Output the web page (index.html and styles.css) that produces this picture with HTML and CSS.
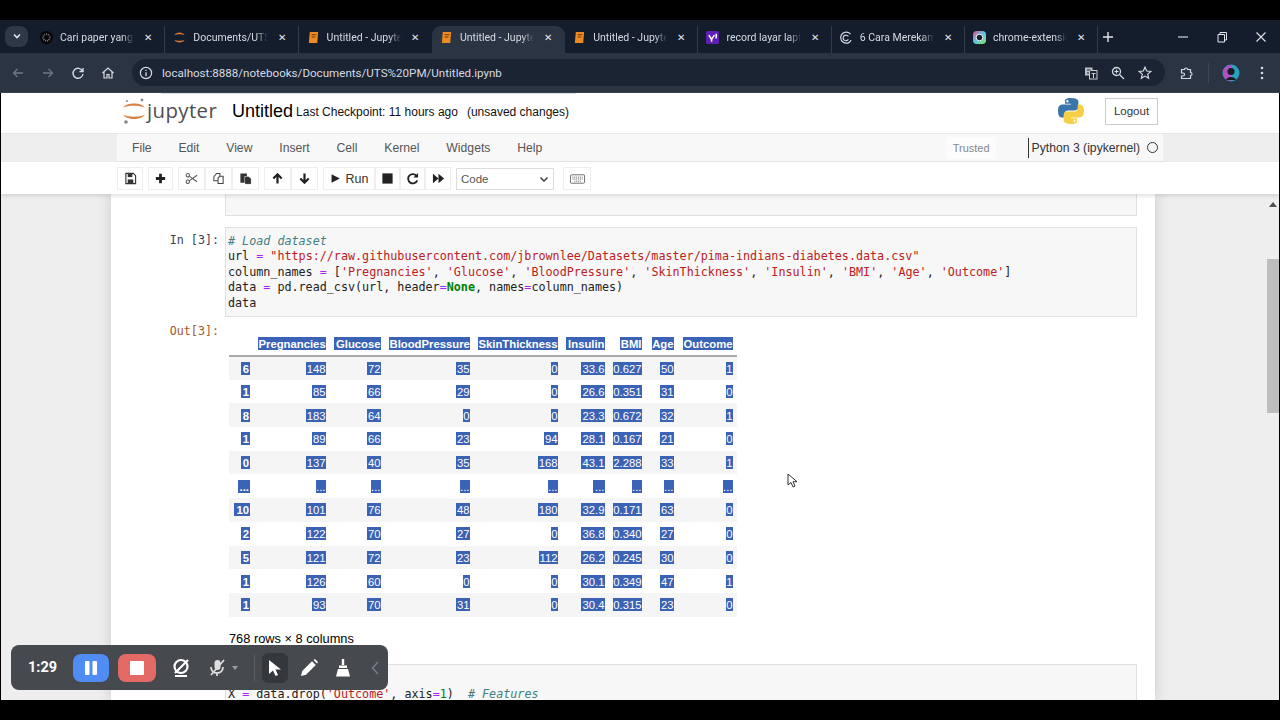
FILE: index.html
```html
<!DOCTYPE html>
<html lang="en">
<head>
<meta charset="utf-8">
<title>Untitled - Jupyter Notebook</title>
<link rel="stylesheet" href="styles.css">
</head>
<body>
<div class="screen">
  <div class="letterbox"></div>
  <div class="chrome">
    <div class="tabstrip">
      <div class="tabmenu"><svg width="10" height="10" viewBox="0 0 10 10"><path d="M2 3.500 5 6.500 8 3.500" fill="none" stroke="#dfe5ec" stroke-width="1.600"/></svg></div>
      <div class="tab">
        <svg class="fav" viewBox="0 0 14 14"><circle cx="7" cy="7" r="7" fill="#050505"/><circle cx="7" cy="7" r="3.600" fill="none" stroke="#888" stroke-width="1.800" stroke-dasharray="1 1"/></svg>
        <span class="tabtitle">Cari paper yang relevan</span><span class="tabx">✕</span>
      </div>
      <div class="tab">
        <svg class="fav" viewBox="0 0 14 14"><path d="M1.500 4.500C3 .5 11 .5 12.500 4.500 9.500 3 4.500 3 1.500 4.500zM1.500 9.500C3 13.500 11 13.500 12.500 9.500 9.500 11 4.500 11 1.500 9.500z" fill="#d9772f"/></svg>
        <span class="tabtitle">Documents/UTS PM/</span><span class="tabx">✕</span>
      </div>
      <div class="tab">
        <svg class="fav" viewBox="0 0 14 14"><path d="M3 1h9l-1 12H2z" fill="#ee8a1f"/><path d="M5 4h5M5 6.500h4" stroke="#5b3308" stroke-width="1"/></svg>
        <span class="tabtitle">Untitled - Jupyter Notebook</span><span class="tabx">✕</span>
      </div>
      <div class="tab tab-active">
        <svg class="fav" viewBox="0 0 14 14"><path d="M3 1h9l-1 12H2z" fill="#ee8a1f"/><path d="M5 4h5M5 6.500h4" stroke="#5b3308" stroke-width="1"/></svg>
        <span class="tabtitle">Untitled - Jupyter Notebook</span><span class="tabx">✕</span>
      </div>
      <div class="tab">
        <svg class="fav" viewBox="0 0 14 14"><path d="M3 1h9l-1 12H2z" fill="#ee8a1f"/><path d="M5 4h5M5 6.500h4" stroke="#5b3308" stroke-width="1"/></svg>
        <span class="tabtitle">Untitled - Jupyter Notebook</span><span class="tabx">✕</span>
      </div>
      <div class="tab">
        <svg class="fav" viewBox="0 0 14 14"><rect width="14" height="14" rx="2" fill="#5f1fb4"/><path d="M3 4.500 6 9v2.500M9 4.500 6 9" fill="none" stroke="#fff" stroke-width="1.700"/><path d="M11 3v5" stroke="#fff" stroke-width="1.600"/></svg>
        <span class="tabtitle">record layar laptop</span><span class="tabx">✕</span>
      </div>
      <div class="tab">
        <svg class="fav" viewBox="0 0 14 14"><path d="M11.500 3.500A6 6 0 1 0 12 10M9 6A3 3 0 1 0 9 9" fill="none" stroke="#d3dae2" stroke-width="1.300"/></svg>
        <span class="tabtitle">6 Cara Merekam Layar</span><span class="tabx">✕</span>
      </div>
      <div class="tab">
        <svg class="fav" viewBox="0 0 14 14"><defs><linearGradient id="rainbow" x1="0" y1="0" x2="1" y2="1"><stop offset="0" stop-color="#e84a8a"/><stop offset=".5" stop-color="#5ac8e8"/><stop offset="1" stop-color="#8de05a"/></linearGradient></defs><rect width="14" height="14" rx="4" fill="url(#rainbow)"/><circle cx="7" cy="7" r="3.600" fill="#1c2330" stroke="#fff" stroke-width="1"/></svg>
        <span class="tabtitle">chrome-extension-recorder</span><span class="tabx">✕</span>
      </div>
      <div class="newtab"><svg width="12" height="12" viewBox="0 0 12 12"><path d="M6 1v10M1 6h10" stroke="#dfe5ec" stroke-width="1.400"/></svg></div>
      <div class="winctl">
        <svg width="12" height="12" viewBox="0 0 12 12"><path d="M1 6h10" stroke="#dfe5ec" stroke-width="1.100"/></svg>
        <svg width="12" height="12" viewBox="0 0 12 12"><path d="M2 3.500h6.500V11H2zM4 3.500V1.500h6.500V9H8.500" fill="none" stroke="#dfe5ec" stroke-width="1"/></svg>
        <svg width="12" height="12" viewBox="0 0 12 12"><path d="M1.500 1.500l9 9M10.500 1.500l-9 9" stroke="#dfe5ec" stroke-width="1.100"/></svg>
      </div>
    </div>
    <div class="urlbar">
      <svg class="navicon" viewBox="0 0 14 14"><path d="M12 7H2.500M6.500 3 2.500 7l4 4" fill="none" stroke="#6c7885" stroke-width="1.300"/></svg>
      <svg class="navicon" viewBox="0 0 14 14"><path d="M2 7h9.500M7.500 3l4 4-4 4" fill="none" stroke="#6c7885" stroke-width="1.300"/></svg>
      <svg class="navicon" viewBox="0 0 14 14"><path d="M11.500 5A5 5 0 1 0 12 8M12 2v3.500H8.500" fill="none" stroke="#d5dbe2" stroke-width="1.400"/></svg>
      <svg class="navicon" viewBox="0 0 14 14"><path d="M1.500 7 7 2l5.500 5M3 6v6h3V8.500h2V12h3V6" fill="none" stroke="#d5dbe2" stroke-width="1.200"/></svg>
      <div class="omnibox">
        <svg class="infoicon" viewBox="0 0 14 14"><circle cx="7" cy="7" r="5.600" fill="none" stroke="#d5dbe2" stroke-width="1.200"/><path d="M7 6.200v4M7 3.800v1.300" stroke="#d5dbe2" stroke-width="1.300"/></svg>
        <span class="urltext">localhost:8888/notebooks/Documents/UTS%20PM/Untitled.ipynb</span>
        <div class="omni-actions">
          <svg class="navicon" viewBox="0 0 14 14"><rect x="1" y="1.500" width="7.500" height="8" fill="#b9bfc6"/><rect x="5.500" y="4.500" width="7.500" height="8.500" fill="#1b2433" stroke="#c9ced4"/><path d="M3 4h3.500M3 7h2" stroke="#222" stroke-width="1"/><path d="M7.500 7.500h4M9.500 7v5" stroke="#c9ced4"/></svg>
          <svg class="navicon" viewBox="0 0 14 14"><circle cx="5.500" cy="5.500" r="4" fill="none" stroke="#d5dbe2" stroke-width="1.300"/><path d="M8.500 8.500 13 13M3.500 5.500h4M5.500 3.500v4" stroke="#d5dbe2" stroke-width="1.200"/></svg>
          <svg class="navicon" viewBox="0 0 14 14"><path d="M7 1.200 8.700 5l4.100.4-3.100 2.700.9 4.100L7 10.100l-3.600 2.100.9-4.100L1.200 5.400 5.300 5z" fill="none" stroke="#d5dbe2" stroke-width="1.200"/></svg>
        </div>
      </div>
      <svg class="navicon ext" viewBox="0 0 14 14"><path d="M1.500 3.500h3a1.500 1.500 0 0 1 3 0h3v3a1.500 1.500 0 0 1 0 3v3H1.500V10H3a1.200 1.200 0 0 0 0-3H1.500z" fill="none" stroke="#d5dbe2" stroke-width="1.200"/></svg>
      <span class="urlsep"></span>
      <svg class="avatar" viewBox="0 0 18 18"><circle cx="9" cy="9" r="8.500" fill="#2b9fc0"/><path d="M1 9a8 8 0 0 1 8-8v16A8 8 0 0 1 1 9z" fill="#b04fc0"/><circle cx="9" cy="7.500" r="3.500" fill="#1a1a22"/><path d="M4 16c1-4 9-4 10 0z" fill="#1a1a22"/></svg>
      <svg class="kebab" viewBox="0 0 4 14"><circle cx="2" cy="2" r="1.300" fill="#d5dbe2"/><circle cx="2" cy="7" r="1.300" fill="#d5dbe2"/><circle cx="2" cy="12" r="1.300" fill="#d5dbe2"/></svg>
    </div>
  </div>

  <main class="page">
    <header class="nbheader">
      <div class="nbheader-inner">
        <svg class="jlogo" viewBox="0 0 26 28"><path d="M2 10.500C6 5 20 5 24 10.500 19 8 7 8 2 10.500z" fill="#d97f3d"/><path d="M2 17.500C6 23.500 20 23.500 24 17.500 19 20.500 7 20.500 2 17.500z" fill="#d97f3d"/><circle cx="21" cy="3" r="1.400" fill="#888"/><circle cx="6" cy="4" r="1" fill="#888"/><circle cx="5" cy="25" r="1.800" fill="#888"/></svg>
        <span class="jword">jupyter</span>
        <span class="nbname">Untitled</span>
        <span class="checkpoint">Last Checkpoint: 11 hours ago</span>
        <span class="autosave">(unsaved changes)</span>
        <svg class="pylogo" viewBox="0 0 26 26"><path d="M12.800 0C6.500 0 7 2.800 7 2.800v2.900h6v.9H4.500S0 6 0 12.900s3.900 6.600 3.900 6.600h2.400v-3.200s-.1-3.900 3.900-3.900h6.500s3.700.1 3.700-3.600V3.700S21 0 12.800 0zM9.400 2a1.200 1.200 0 1 1 0 2.400 1.200 1.200 0 0 1 0-2.400z" fill="#3a76a8"/><path d="M13.200 26c6.300 0 5.800-2.800 5.800-2.800v-2.900h-6v-.9h8.500S26 20 26 13.100s-3.900-6.600-3.900-6.600h-2.400v3.200s.1 3.900-3.900 3.900H9.300s-3.700-.1-3.700 3.600v5.100S5 26 13.200 26zm3.400-2a1.200 1.200 0 1 1 0-2.400 1.200 1.200 0 0 1 0 2.400z" fill="#f5cf45"/></svg>
        <button class="logout">Logout</button>
      </div>
    </header>
    <nav class="menubar">
      <span class="menuitem">File</span>
      <span class="menuitem">Edit</span>
      <span class="menuitem">View</span>
      <span class="menuitem">Insert</span>
      <span class="menuitem">Cell</span>
      <span class="menuitem">Kernel</span>
      <span class="menuitem">Widgets</span>
      <span class="menuitem">Help</span>
      <span class="trusted">Trusted</span>
      <span class="kernelname">Python 3 (ipykernel)</span>
      <span class="kernelstate"></span>
    </nav>
    <div class="nbtoolbar">
      <div class="btngroup"><span class="tb w26"><svg class="ti" viewBox="0 0 14 14"><path d="M2 1.500h8l2.500 2.500v8.500H2z" fill="none" stroke="#333" stroke-width="1.200"/><rect x="4" y="2" width="5" height="3.500" fill="#333"/><rect x="4" y="8" width="6" height="4" fill="#333"/></svg></span></div>
      <div class="btngroup"><span class="tb w25"><svg class="ti" viewBox="0 0 14 14"><path d="M7 2v10M2 7h10" stroke="#222" stroke-width="3"/></svg></span></div>
      <div class="btngroup">
        <span class="tb w27"><svg class="ti" viewBox="0 0 14 14"><circle cx="3" cy="3.500" r="1.800" fill="none" stroke="#555" stroke-width="1.100"/><circle cx="3" cy="10.500" r="1.800" fill="none" stroke="#555" stroke-width="1.100"/><path d="M4.500 4.500 13 10.500M4.500 9.500 13 3.500" stroke="#555" stroke-width="1.100"/></svg></span>
        <span class="tb w27"><svg class="ti" viewBox="0 0 14 14"><path d="M5 1.500h3.500v3H12v8H6.500v-3H2V5z" fill="none" stroke="#444" stroke-width="1.100"/><path d="M8.500 4.500 6.500 6.500v3" fill="none" stroke="#444" stroke-width="1.100"/></svg></span>
        <span class="tb w27"><svg class="ti" viewBox="0 0 14 14"><path d="M1.500 1.500h7v3H6v7H1.500z" fill="#333"/><path d="M7 5.500h3.500l2 2v5H7z" fill="#333" stroke="#333" stroke-width="1"/></svg></span>
      </div>
      <div class="btngroup">
        <span class="tb w27"><svg class="ti" viewBox="0 0 14 14"><path d="M7 12.500V3M2.500 7 7 2.500 11.500 7" fill="none" stroke="#222" stroke-width="2.400"/></svg></span>
        <span class="tb w27"><svg class="ti" viewBox="0 0 14 14"><path d="M7 1.500V11M2.500 7 7 11.500 11.500 7" fill="none" stroke="#222" stroke-width="2.400"/></svg></span>
      </div>
      <div class="btngroup">
        <span class="tb w52 runbtn"><svg class="ti" viewBox="0 0 14 14"><path d="M2 1.500 12.500 7 2 12.500z" fill="#222"/></svg>Run</span>
        <span class="tb w25"><svg class="ti" viewBox="0 0 14 14"><rect x="1.500" y="1.500" width="11" height="11" fill="#222"/></svg></span>
        <span class="tb w25"><svg class="ti" viewBox="0 0 14 14"><path d="M11.500 4.500A5 5 0 1 0 12 9" fill="none" stroke="#222" stroke-width="2"/><path d="M13 1v5H8z" fill="#222"/></svg></span>
        <span class="tb w26"><svg class="ti" viewBox="0 0 14 14"><path d="M1 2 7 7 1 12zM7 2l6 5-6 5z" fill="#222"/></svg></span>
      </div>
      <div class="celltype">Code<svg width="10" height="10" viewBox="0 0 10 10"><path d="M1.500 3.500 5 7 8.500 3.500" fill="none" stroke="#333" stroke-width="1.400"/></svg></div>
      <span class="tb w28 kbd"><svg class="ti" viewBox="0 0 16 12"><rect x=".5" y="1.500" width="15" height="9" rx="1" fill="none" stroke="#666"/><path d="M2.500 4h11M2.500 6h11M4.500 8.300h7" stroke="#666" stroke-dasharray="1.200 .8"/></svg></span>
    </div>

    <div class="site">
      <div class="container">
        <div class="prevtail"></div>
        <div class="cell">
          <div class="prompt in">In [3]:</div>
          <pre class="code"><span class="c-com"># Load dataset</span>
url <span class="c-op">=</span> <span class="c-str">"https://raw.githubusercontent.com/jbrownlee/Datasets/master/pima-indians-diabetes.data.csv"</span>
column_names <span class="c-op">=</span> [<span class="c-str">'Pregnancies'</span>, <span class="c-str">'Glucose'</span>, <span class="c-str">'BloodPressure'</span>, <span class="c-str">'SkinThickness'</span>, <span class="c-str">'Insulin'</span>, <span class="c-str">'BMI'</span>, <span class="c-str">'Age'</span>, <span class="c-str">'Outcome'</span>]
data <span class="c-op">=</span> pd.read_csv(url, header<span class="c-op">=</span><span class="c-kw">None</span>, names<span class="c-op">=</span>column_names)
data</pre>
        </div>
        <div class="output">
          <div class="prompt out">Out[3]:</div>
          <div class="outbody">
            <table class="df">
              <thead><tr><th class="idx"></th><th><b>Pregnancies</b></th><th><b>Glucose</b></th><th><b>BloodPressure</b></th><th><b>SkinThickness</b></th><th><b>Insulin</b></th><th><b>BMI</b></th><th><b>Age</b></th><th><b>Outcome</b></th></tr></thead>
              <tbody>
                <tr><th class="idx"><b>6</b></th><td><b>148</b></td><td><b>72</b></td><td><b>35</b></td><td><b>0</b></td><td><b>33.6</b></td><td><b>0.627</b></td><td><b>50</b></td><td><b>1</b></td></tr>
                <tr><th class="idx"><b>1</b></th><td><b>85</b></td><td><b>66</b></td><td><b>29</b></td><td><b>0</b></td><td><b>26.6</b></td><td><b>0.351</b></td><td><b>31</b></td><td><b>0</b></td></tr>
                <tr><th class="idx"><b>8</b></th><td><b>183</b></td><td><b>64</b></td><td><b>0</b></td><td><b>0</b></td><td><b>23.3</b></td><td><b>0.672</b></td><td><b>32</b></td><td><b>1</b></td></tr>
                <tr><th class="idx"><b>1</b></th><td><b>89</b></td><td><b>66</b></td><td><b>23</b></td><td><b>94</b></td><td><b>28.1</b></td><td><b>0.167</b></td><td><b>21</b></td><td><b>0</b></td></tr>
                <tr><th class="idx"><b>0</b></th><td><b>137</b></td><td><b>40</b></td><td><b>35</b></td><td><b>168</b></td><td><b>43.1</b></td><td><b>2.288</b></td><td><b>33</b></td><td><b>1</b></td></tr>
                <tr><th class="idx"><b>...</b></th><td><b>...</b></td><td><b>...</b></td><td><b>...</b></td><td><b>...</b></td><td><b>...</b></td><td><b>...</b></td><td><b>...</b></td><td><b>...</b></td></tr>
                <tr><th class="idx"><b>10</b></th><td><b>101</b></td><td><b>76</b></td><td><b>48</b></td><td><b>180</b></td><td><b>32.9</b></td><td><b>0.171</b></td><td><b>63</b></td><td><b>0</b></td></tr>
                <tr><th class="idx"><b>2</b></th><td><b>122</b></td><td><b>70</b></td><td><b>27</b></td><td><b>0</b></td><td><b>36.8</b></td><td><b>0.340</b></td><td><b>27</b></td><td><b>0</b></td></tr>
                <tr><th class="idx"><b>5</b></th><td><b>121</b></td><td><b>72</b></td><td><b>23</b></td><td><b>112</b></td><td><b>26.2</b></td><td><b>0.245</b></td><td><b>30</b></td><td><b>0</b></td></tr>
                <tr><th class="idx"><b>1</b></th><td><b>126</b></td><td><b>60</b></td><td><b>0</b></td><td><b>0</b></td><td><b>30.1</b></td><td><b>0.349</b></td><td><b>47</b></td><td><b>1</b></td></tr>
                <tr><th class="idx"><b>1</b></th><td><b>93</b></td><td><b>70</b></td><td><b>31</b></td><td><b>0</b></td><td><b>30.4</b></td><td><b>0.315</b></td><td><b>23</b></td><td><b>0</b></td></tr>
              </tbody>
            </table>
            <p class="dfsize">768 rows × 8 columns</p>
          </div>
        </div>
        <div class="cell nextcell">
          <pre class="code">X <span class="c-op">=</span> data.drop(<span class="c-str">'Outcome'</span>, axis<span class="c-op">=</span><span class="c-num">1</span>)  <span class="c-com"># Features</span></pre>
        </div>
      </div>
      <div class="scrollbar">
        <svg class="arrow" width="8" height="5" viewBox="0 0 8 5"><path d="M4 0 8 5H0z" fill="#505050"/></svg>
        <div class="thumb"></div>
      </div>
    </div>

    <svg class="cursor" width="12" height="16" viewBox="0 0 12 16"><path d="M1 1v11l3-2.500 2 4.500 2-1-2-4.300h4z" fill="#fff" stroke="#333" stroke-width="1"/></svg>

    <div class="recorder">
      <span class="rec-time">1:29</span>
      <span class="rec-btn rec-pause"><svg width="16" height="16" viewBox="0 0 16 16"><rect x="2" y="1" width="4.500" height="14" rx="1" fill="#fff"/><rect x="9.500" y="1" width="4.500" height="14" rx="1" fill="#fff"/></svg></span>
      <span class="rec-btn rec-stop"><svg width="14" height="14" viewBox="0 0 14 14"><rect width="14" height="14" rx="1" fill="#fff"/></svg></span>
      <svg class="rec-icon cam" viewBox="0 0 20 20"><circle cx="10" cy="8.500" r="6.500" fill="none" stroke="#fff" stroke-width="2.200"/><path d="M4 18h12M17 2 4 15" stroke="#fff" stroke-width="2.200"/></svg>
      <svg class="rec-icon mic" viewBox="0 0 20 20"><rect x="7.500" y="2" width="6" height="10" rx="3" fill="#ddd"/><path d="M4 9c0 4 3 6 6 6s6-2 6-6M10 15v3M17 2 4 17" fill="none" stroke="#ddd" stroke-width="1.800"/></svg>
      <svg class="rec-caret" width="6" height="4" viewBox="0 0 6 4"><path d="M0 0h6L3 4z" fill="#9a9ea3"/></svg>
      <span class="rec-sep"></span>
      <span class="rec-active"><svg width="14" height="18" viewBox="0 0 14 18"><path d="M1 1v14l4-3.500 2.500 5.500 2.500-1-2.500-5.500H13z" fill="#fff"/></svg></span>
      <svg class="rec-icon pen" viewBox="0 0 20 20"><path d="M2 18l1.200-5L13 3.200l3.800 3.800L7 16.800zM14.500 2l3.500 3.500 1-1.500-3-3z" fill="#fff"/></svg>
      <svg class="rec-icon brush" viewBox="0 0 20 20"><path d="M8.800 1h2.400v6H8.800zM6 7.500h8V10H6zM5 11h10l2 7.500H3z" fill="#fff"/></svg>
      <svg class="rec-collapse" width="8" height="14" viewBox="0 0 8 14"><path d="M7 1 1.500 7 7 13" fill="none" stroke="#777b80" stroke-width="1.600"/></svg>
    </div>
  </main>
  <div class="letterbox"></div>
</div>
</body>
</html>
```
FILE: styles.css
```css
* { box-sizing: border-box; }
html, body { margin: 0; height: 100%; background: #000; overflow: hidden; }
body { font-family: "Liberation Sans", Arial, sans-serif; }
.screen { width: 1280px; height: 720px; display: flex; flex-direction: column; }
.letterbox { height: 20px; flex: none; background: #000; }

/* Browser chrome */
.chrome { height: 73px; flex: none; background: #141d2b; }
.tabstrip { height: 33px; display: flex; align-items: center; padding-left: 5px; color: #d5dbe2; font-family: Roboto, "Liberation Sans", sans-serif; font-size: 10.5px; }
.tabmenu { width: 23px; height: 21px; margin-top: -1px; border-radius: 8px; background: #2e3846; display: flex; align-items: center; justify-content: center; flex: none; margin-right: 4px; }
.tab { width: 133.3px; height: 27px; margin-top: 6px; flex: none; display: flex; align-items: center; padding: 1px 9px 5px 8px; border-right: 1px solid #333c49; background-clip: padding-box; }
.tab:has(+ .tab-active) { border-right-color: transparent; }
.tab-active { background: #2a3442; border-radius: 9px 9px 0 0; border-right-color: transparent; }
.fav { width: 13px; height: 13px; flex: none; margin-right: 7px; }
.tabtitle { flex: 1; min-width: 0; white-space: nowrap; overflow: hidden; -webkit-mask-image: linear-gradient(90deg, #000 84%, transparent 100%); mask-image: linear-gradient(90deg, #000 84%, transparent 100%); }
.tabx { font-size: 10px; width: 14px; margin-left: 7px; text-align: center; color: #e3e7ec; flex: none; }
.newtab { margin-left: 4px; flex: none; display: flex; }
.winctl { margin-left: auto; display: flex; gap: 27px; padding-right: 13px; align-items: center; }

.urlbar { height: 40px; background: #2a3442; border-bottom: 1px solid #3a4450; display: flex; align-items: center; padding: 0 16px 0 11px; }
.navicon { width: 14px; height: 14px; flex: none; margin-right: 16px; }
.omnibox { flex: 1; height: 27px; margin-left: 1px; margin-right: 15px; background: #1b2433; border-radius: 13.5px; display: flex; align-items: center; padding-left: 7px; }
.infoicon { width: 14px; height: 14px; flex: none; margin-right: 9px; }
.urltext { color: #d5dbe2; font-family: Roboto, "Liberation Sans", sans-serif; font-size: 11.6px; white-space: nowrap; }
.omni-actions { margin-left: auto; display: flex; padding-right: 0; }
.omni-actions .navicon { margin-right: 13px; }
.ext { margin-right: 14px; }
.urlsep { width: 1px; height: 20px; background: #3e4855; margin-right: 13px; flex: none; }
.avatar { width: 18px; height: 18px; flex: none; margin-right: 20px; }
.kebab { width: 4px; height: 14px; flex: none; }

/* Notebook page */
.page { flex: 1; min-height: 0; position: relative; overflow: hidden; background: #eee; display: flex; flex-direction: column; margin-left: 1px; margin-right: 1px; }
.nbheader { height: 41px; flex: none; background: #fff; border-bottom: 1px solid #e7e7e7; position: relative; }
.nbheader::before { content: ""; position: absolute; left: 160px; top: 0; width: 415px; height: 1px; background: #ddd; }
.nbheader-inner { height: 100%; display: flex; align-items: center; padding: 0 0 4px 120px; color: #000; }
.jlogo { width: 26px; height: 28px; flex: none; }
.jword { font-family: "Open Sans", Lato, sans-serif; font-size: 20.4px; color: #4e4e4e; width: 85px; letter-spacing: .4px; margin-bottom: 3px; }
.nbname { font-size: 18px; margin-right: 3px; }
.checkpoint { font-size: 12px; margin-right: 9px; margin-top: 1px; color: #111; }
.autosave { font-size: 12px; margin-top: 1px; color: #111; }
.pylogo { width: 26px; height: 26px; flex: none; margin-left: auto; margin-right: 21px; }
.logout { width: 53px; height: 27px; margin-right: 121px; padding: 0; background: #fff; border: 1px solid #ccc; font: 11.5px "Liberation Sans", sans-serif; color: #333; }

.menubar { height: 28px; flex: none; margin: 0 116px; background: #f8f8f8; border-bottom: 1px solid #e7e7e7; display: flex; align-items: center; padding-left: 15px; font-size: 12.2px; color: #555; }
.menuitem { margin-right: 26.800px; }
.trusted { margin-left: auto; width: 49px; height: 22px; line-height: 22px; text-align: center; font-size: 11px; color: #888; background: #fcfcfc; margin-right: 32px; }
.kernelname { border-left: 1px solid #333; padding-left: 3px; height: 20px; line-height: 20px; color: #333; }
.kernelstate { width: 11px; height: 11px; border: 1.500px solid #333; border-radius: 50%; margin-left: 7px; margin-right: 5px; flex: none; }

.nbtoolbar { height: 32px; flex: none; background: #fff; display: flex; align-items: flex-start; padding: 5px 0 0 116px; position: relative; box-shadow: 0 2px 4px rgba(0,0,0,.12); z-index: 2; }
.btngroup { display: flex; margin-right: 5px; }
.tb { height: 23px; display: flex; align-items: center; justify-content: center; border: 1px solid #eee; background: #fff; flex: none; font-size: 12.5px; color: #333; }
.w25 { width: 25px; } .w26 { width: 26px; } .w27 { width: 27px; } .w28 { width: 28px; } .w52 { width: 52px; }
.ti { width: 13px; height: 13px; flex: none; }
.runbtn .ti { margin-right: 5px; width: 11px; height: 11px; }
.celltype { width: 98px; height: 22px; border: 1px solid #ddd; display: flex; align-items: center; justify-content: space-between; padding: 0 4px; font-size: 11.5px; color: #555; margin-right: 9px; margin-top: 1px; }
.kbd .ti { width: 15px; height: 12px; }

.site { flex: 1; min-height: 0; display: flex; position: relative; }
.container { width: 1044px; margin-left: 110px; background: #fff; box-shadow: 0 0 12px 1px rgba(87,87,87,.2); padding: 0 18px 0 114px; flex: none; overflow: hidden; }
.prevtail { height: 22px; background: #f7f7f7; border: 1px solid #e0e0e0; border-top: 0; }
.cell { position: relative; margin-top: 11px; }
.prompt { position: absolute; left: -58px; width: 52px; text-align: right; font: 11.7px/15.400px "DejaVu Sans Mono", monospace; }
.prompt.in { top: 6px; color: #3a3f5c; }
.prompt.out { top: 7px; color: #a0592c; }
.code { margin: 0; height: 90px; padding: 6px 2px; background: #f7f7f7; border: 1px solid #e0e0e0; font: 11.730px/15.400px "DejaVu Sans Mono", monospace; color: #222; white-space: pre; }
.c-com { color: #408080; font-style: italic; }
.c-op { color: #aa22ff; }
.c-str { color: #ba2121; }
.c-kw { color: #008000; font-weight: bold; }
.c-num { color: #008000; }
.output { position: relative; padding: 14px 0 0 4px; }
.df { border-collapse: collapse; table-layout: fixed; width: 508px; font-size: 11.3px; color: #fff; }
.df b { background: #3b63b5; font-weight: inherit; padding: .5px .5px; }
.df thead th { font-weight: bold; text-align: right; padding: 0 4px; height: 25px; border-bottom: 2px solid #aaa; color: #fff; }
.df tbody th { font-weight: bold; text-align: right; padding: 0 4px; height: 23.700px; }
.df td { text-align: right; padding: 0 4px; height: 23.700px; }
.df tbody tr:nth-child(odd) { background: #f5f5f5; }
.df th:nth-child(1) { width: 25px; }
.df th:nth-child(2) { width: 76px; }
.df th:nth-child(3) { width: 55px; }
.df th:nth-child(4) { width: 89px; }
.df th:nth-child(5) { width: 88px; }
.df th:nth-child(6) { width: 47px; }
.df th:nth-child(7) { width: 37px; padding-left: 0; }
.df td:nth-child(7) { padding-left: 0; }
.df th:nth-child(8) { width: 32px; }
.df th:nth-child(9) { width: 59px; }
.df tbody .idx b { padding-left: 2px; padding-right: 1px; }
.df thead th:nth-child(3) b, .df thead th:nth-child(6) b, .df td:nth-child(6) b { padding-left: 2px; }
.dfsize { margin: 14px 0 0; font-size: 12.800px; color: #000; }
.nextcell { margin-top: 18px; }
.nextcell .code { height: 60px; padding-top: 22px; }

.scrollbar { margin-left: auto; width: 13px; background: #eee; position: relative; display: flex; flex-direction: column; align-items: center; }
.arrow { margin-top: 8px; }
.thumb { width: 12px; height: 154px; margin-top: 52px; background: #bdbdbd; }

.cursor { position: absolute; left: 786px; top: 380px; }

.recorder { position: absolute; left: 10px; top: 552px; width: 377px; height: 45px; background: #464a4f; border-radius: 8px; display: flex; align-items: center; padding-left: 17px; color: #fff; z-index: 5; }
.rec-time { font: bold 14.5px Roboto, "Liberation Sans", sans-serif; width: 30px; margin-right: 15px; }
.rec-btn { height: 28px; border-radius: 8px; display: flex; align-items: center; justify-content: center; flex: none; }
.rec-pause { width: 36px; background: #4f8df5; margin-right: 9px; }
.rec-stop { width: 38px; background: #e46a66; margin-right: 15px; }
.rec-icon { width: 20px; height: 20px; flex: none; }
.mic { margin-left: 16px; margin-right: 5px; }
.rec-caret { margin-right: 16px; flex: none; }
.rec-sep { width: 1px; height: 26px; background: #5b5f64; margin-right: 7px; flex: none; }
.rec-active { width: 26px; height: 30px; background: #34383c; border-radius: 6px; display: flex; align-items: center; justify-content: center; margin-right: 11px; flex: none; }
.brush { margin-left: 14px; margin-right: 18px; }
.rec-collapse { flex: none; }
```
